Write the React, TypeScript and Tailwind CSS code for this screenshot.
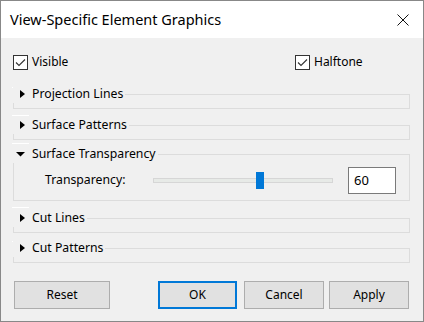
import React from "react";

function Arrow({ open }: { open?: boolean }) {
  return (
    <svg width="16" height="16" viewBox="0 0 16 16" className="shrink-0">
      {open ? (
        <path d="M2 6 L11 6 L6.5 10.5 Z" fill="#000" />
      ) : (
        <path d="M6 4 L11 8 L6 12 Z" fill="#000" />
      )}
    </svg>
  );
}

function CheckBox({ label }: { label: string }) {
  return (
    <div className="flex items-center">
      <div className="flex h-[15px] w-[15px] items-center justify-center border border-[#333333] bg-white">
        <svg width="11" height="9" viewBox="0 0 11 9">
          <path d="M1 4.5 L4 7.5 L10 1.5" fill="none" stroke="#333" strokeWidth="1.1" />
        </svg>
      </div>
      <span className="ml-[4px] text-[12px] text-black">{label}</span>
    </div>
  );
}

function GroupBox({
  title,
  open,
  className,
  glint,
  children
}: {
  title: string;
  open?: boolean;
  className: string;
  glint: string;
  children?: React.ReactNode;
}) {
  return (
    <div className={`relative border border-[#dcdcdc] ${className}`}>
      <div className={`absolute left-[-2px] h-px w-[17px] bg-white ${glint}`} />
      <div className="absolute left-[-1px] top-[-10px] flex h-[18px] items-center bg-[#f0f0f0] pl-[1px] pr-[2px]">
        <Arrow open={open} />
        <span className="ml-[2px] text-[12.25px] leading-none text-black">{title}</span>
      </div>
      {children}
    </div>
  );
}

function Button({ label, primary }: { label: string; primary?: boolean }) {
  return (
    <button
      className={`flex h-[28px] items-center justify-center bg-[#e1e1e1] text-[12px] text-black ${
        primary ? "border-2 border-[#0078d7]" : "border border-[#adadad]"
      }`}>
      {label}
    </button>
  );
}

export default function App() {
  return (
    <div
      className="flex h-[322px] w-[424px] flex-col border border-[#888888] bg-[#f0f0f0]"
      style={{ fontFamily: '"Segoe UI", "Noto Sans", "Open Sans", sans-serif' }}>
      <div className="flex h-[37px] shrink-0 items-center justify-between bg-white pl-[9px] pr-[14px]">
        <span className="text-[14.5px] text-black">View-Specific Element Graphics</span>
        <svg width="12" height="12" viewBox="0 0 12 12">
          <path d="M0.5 0.5 L11.5 11.5 M11.5 0.5 L0.5 11.5" stroke="#111" strokeWidth="1" />
        </svg>
      </div>

      <div className="flex flex-col pl-[12px] pr-[13px]">
        <div className="mt-[16px] flex h-[16px] items-center">
          <div className="w-[282px]">
            <CheckBox label="Visible" />
          </div>
          <CheckBox label="Halftone" />
        </div>

        <GroupBox title="Projection Lines" className="mt-[24px] h-[15px]" glint="top-[-8px]" />
        <GroupBox title="Surface Patterns" className="mt-[16px] h-[15px]" glint="top-[-11px]" />
        <GroupBox title="Surface Transparency" open className="mt-[14px] h-[47px]" glint="top-[-12px]">
          <div className="flex h-full items-center pt-[6px]">
            <span className="ml-[31px] w-[108px] text-[12.25px] text-black">Transparency:</span>
            <div className="relative h-[5px] w-[180px] border border-[#d6d6d6] bg-[#e7eae7]">
              <div className="absolute left-[102px] top-[-7px] h-[17px] w-[8px] bg-[#0078d7]" />
            </div>
            <div className="ml-[15px] flex h-[27px] w-[48px] items-center border border-[#7a7a7a] bg-white pl-[5px] text-[13px] text-black">
              60
            </div>
          </div>
        </GroupBox>
        <GroupBox title="Cut Lines" className="mt-[17px] h-[15px]" glint="top-[-12px]" />
        <GroupBox title="Cut Patterns" className="mt-[15px] h-[15px]" glint="top-[-8px]" />

        <div className="mt-[18px] flex items-center">
          <div className="ml-[1px] flex w-[96px] flex-col">
            <Button label="Reset" />
          </div>
          <div className="ml-[48px] flex w-[79px] flex-col">
            <Button label="OK" primary />
          </div>
          <div className="ml-[7px] flex w-[80px] flex-col">
            <Button label="Cancel" />
          </div>
          <div className="ml-[5px] flex w-[80px] flex-col">
            <Button label="Apply" />
          </div>
        </div>
      </div>
    </div>
  );
}
